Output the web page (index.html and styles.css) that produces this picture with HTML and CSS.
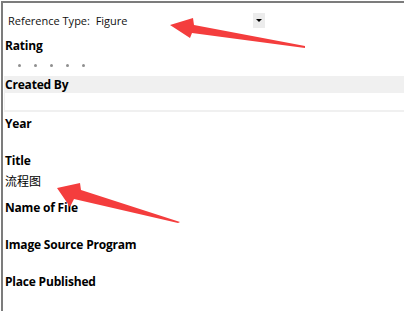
FILE: index.html
```html
<!DOCTYPE html>
<html lang="en">
<head>
    <meta charset="UTF-8">
    <title>Reference Editor</title>
    <link rel="stylesheet" href="styles.css">
</head>
<body>
    <div class="panel">
        <div class="type-row">
            <span class="type-label">Reference Type:&nbsp;&nbsp;Figure</span>
            <span class="drop-btn"><span class="caret"></span></span>
        </div>

        <div class="field">
            <div class="label">Rating</div>
            <div class="rating">
                <span class="dot"></span><span class="dot"></span><span class="dot"></span><span class="dot"></span><span class="dot"></span>
            </div>
        </div>

        <div class="field active">
            <div class="label">Created By</div>
            <div class="input"></div>
        </div>

        <div class="field">
            <div class="label">Year</div>
            <div class="value"></div>
        </div>

        <div class="field">
            <div class="label">Title</div>
            <div class="value cjk">流程图</div>
        </div>

        <div class="field">
            <div class="label">Name of File</div>
            <div class="value"></div>
        </div>

        <div class="field">
            <div class="label">Image Source Program</div>
            <div class="value"></div>
        </div>

        <div class="field">
            <div class="label">Place Published</div>
            <div class="value"></div>
        </div>

        <!-- annotation arrows drawn over the form -->
        <svg class="arrows" width="404" height="311" viewBox="0 0 404 311">
            <polygon fill="#f43d3d" points="170,25 193,18 194,25 305,46 305,48 192,33 190,38"/>
            <polygon fill="#f43d3d" points="57,188 80,183 81,190 180,222 178,223 74,199 70,207"/>
        </svg>
    </div>
</body>
</html>
```

FILE: styles.css
```css
* {
    margin: 0;
    padding: 0;
    box-sizing: border-box;
}

body {
    background: white;
    font-family: 'Open Sans', 'Noto Sans CJK SC', sans-serif;
    font-size: 12px;
    color: #000;
    padding: 1px 0 0 1px;
}

.panel {
    position: relative;
    height: 310px;
    border-top: 2px solid #7c7c7c;
    border-left: 2px solid #7c7c7c;
    overflow: hidden;
}

.type-row {
    display: flex;
    align-items: center;
    height: 34px;
    padding: 0 0 0 5px;
}

.type-label {
    width: 245px;
    font-size: 11px;
    color: #111;
}

.drop-btn {
    display: flex;
    align-items: center;
    justify-content: center;
    width: 12px;
    height: 15px;
    background: #ececec;
}

.caret {
    width: 0;
    height: 0;
    border-left: 3px solid transparent;
    border-right: 3px solid transparent;
    border-top: 3px solid #000;
}

.field {
    padding-left: 2px;
}

.label {
    height: 17px;
    line-height: 17px;
    font-weight: bold;
    letter-spacing: -0.2px;
}

.value {
    height: 20px;
}

.value.cjk {
    height: 30px;
    line-height: 24px;
    font-family: 'Noto Sans CJK SC', sans-serif;
}

.rating {
    display: flex;
    gap: 13px;
    align-items: center;
    height: 22px;
    padding-left: 13px;
}

.dot {
    width: 3px;
    height: 3px;
    border-radius: 50%;
    background: #8f8f8f;
}

.active {
    margin: 0 0 3px 1px;
    padding-left: 1px;
    background: #f0f0f0;
}

.input {
    height: 19px;
    margin-left: -1px;
    border-left: 1px solid #f0f0f0;
    border-bottom: 2px solid #f0f0f0;
    background: white;
}

.arrows {
    position: absolute;
    left: -3px;
    top: -3px;
    pointer-events: none;
}
```
